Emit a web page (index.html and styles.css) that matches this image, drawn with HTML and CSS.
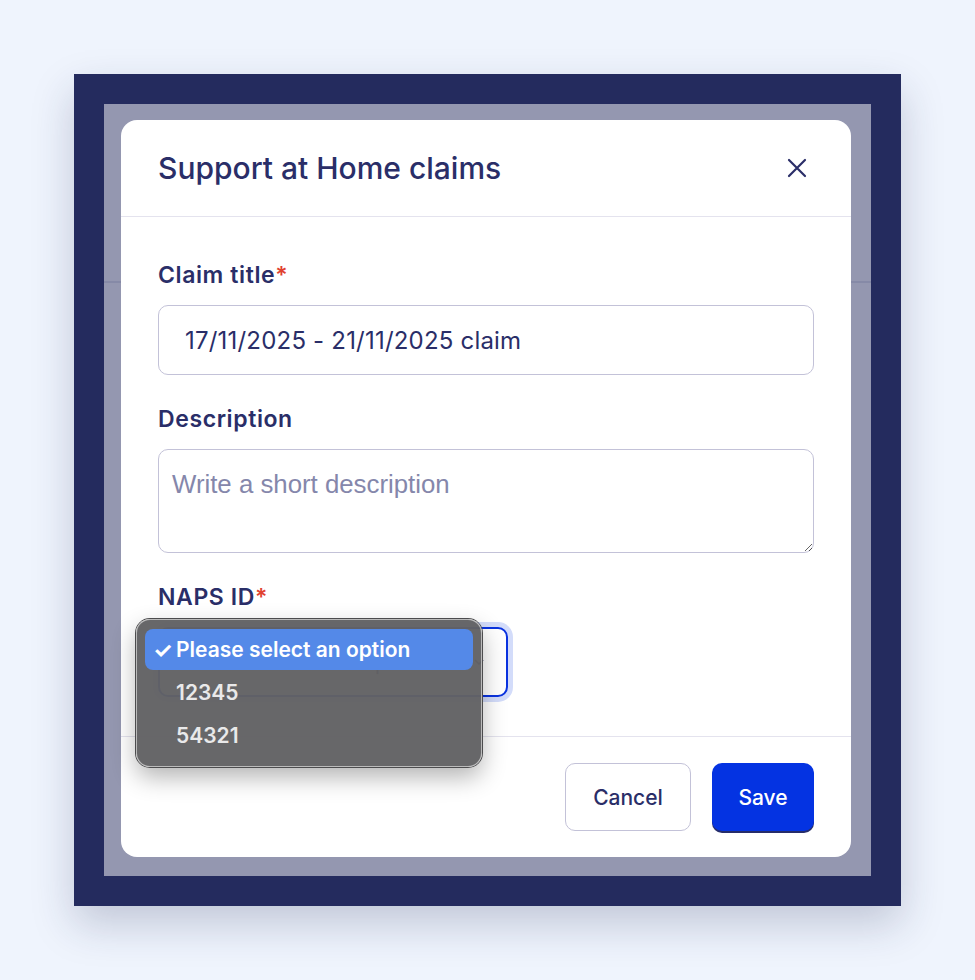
FILE: index.html
```html
<!DOCTYPE html>
<html lang="en">
<head>
  <meta charset="UTF-8" />
  <meta name="viewport" content="width=device-width, initial-scale=1.0"/>
  <title>Support at Home claims</title>
  <link rel="stylesheet" href="styles.css">
</head>
<body>
  <div class="screen">
    <div class="viewport">
      <!-- Page behind the dialog -->
      <div class="app-page">
        <div class="app-heading">Your support summary by type and approval</div>
        <div class="app-divider"></div>
      </div>

      <!-- Backdrop + dialog -->
      <div class="backdrop">
        <div class="modal">
          <div class="modal-header">
            <h2>Support at Home claims</h2>
            <button type="button" class="close-btn" aria-label="Close">
              <svg width="20" height="20" viewBox="0 0 20 20" fill="none" stroke="currentColor" stroke-width="2.2" stroke-linecap="round">
                <path d="M2 2 L18 18 M18 2 L2 18"/>
              </svg>
            </button>
          </div>

          <form class="modal-body" id="claimForm">
            <!-- Claim title -->
            <div class="form-group">
              <label for="claimTitle">Claim title<span class="req">*</span></label>
              <input type="text" id="claimTitle" value="17/11/2025 - 21/11/2025 claim">
            </div>

            <!-- Description -->
            <div class="form-group">
              <label for="claimDesc">Description</label>
              <textarea id="claimDesc" placeholder="Write a short description"></textarea>
            </div>

            <!-- NAPS ID select, open -->
            <div class="form-group">
              <label for="napsId">NAPS ID<span class="req">*</span></label>
              <div class="select-wrap">
                <div class="select-box" id="napsId">
                  <span class="select-value">Please select an option</span>
                  <svg class="chevron" width="10" height="6" viewBox="0 0 10 6" fill="none" stroke="#2b2f6b" stroke-width="1.6">
                    <path d="M1 1 L5 5 L9 1"/>
                  </svg>
                </div>
                <div class="select-menu">
                  <div class="menu-item selected"><span class="check">✓</span>Please select an option</div>
                  <div class="menu-item">12345</div>
                  <div class="menu-item">54321</div>
                </div>
              </div>
            </div>
          </form>

          <div class="modal-footer">
            <button type="button" class="cancel-btn">Cancel</button>
            <button type="submit" class="save-btn" form="claimForm">Save</button>
          </div>
        </div>
      </div>
    </div>
  </div>
</body>
</html>
```

FILE: styles.css
```css
body {
  margin: 0;
  padding: 74px;
  min-height: 100vh;
  box-sizing: border-box;
  background-color: #eff4fd;
  font-family: Inter, "Noto Sans", sans-serif;
}

.screen {
  width: 827px;
  height: 832px;
  box-sizing: border-box;
  padding: 30px;
  background-color: #242b5e;
  box-shadow: 0 18px 40px rgba(30, 40, 80, 0.22);
}

.viewport {
  display: grid;
  height: 100%;
  overflow: hidden;
  background-color: white;
}

.app-page,
.backdrop {
  grid-area: 1 / 1;
}

.app-page {
  display: flex;
  flex-direction: column;
}

.app-heading {
  margin-top: -29px;
  padding-left: 230px;
  height: 28px;
  font-size: 24px;
  line-height: 28px;
  color: #242b5e;
}

.app-divider {
  margin-top: 178px;
  border-bottom: 2px solid #e4e5ee;
}

.backdrop {
  padding: 16px 0 0 17px;
  background-color: rgba(36, 43, 94, 0.49);
}

.modal {
  width: 730px;
  height: 737px;
  background-color: white;
  border-radius: 16px;
  display: flex;
  flex-direction: column;
  color: #2a2e68;
}

.modal-header {
  height: 96px;
  padding: 0 44px 0 37px;
  display: flex;
  align-items: center;
  justify-content: space-between;
  border-bottom: 1px solid #e4e3ee;
}

.modal-header h2 {
  margin: 0;
  font-size: 30px;
  font-weight: 500;
}

.close-btn {
  border: none;
  background: none;
  padding: 0;
  color: #2a2e68;
  display: flex;
  cursor: pointer;
}

.modal-body {
  flex: 1;
  padding: 44px 37px 0;
  display: flex;
  flex-direction: column;
  gap: 30px;
  border-bottom: 1px solid #e4e3ee;
}

.form-group {
  display: flex;
  flex-direction: column;
}

label {
  font-size: 23px;
  line-height: 28px;
  font-weight: 600;
  letter-spacing: 0.6px;
  margin-bottom: 16px;
}

.req {
  color: #e0412f;
}

input[type="text"],
textarea,
.select-box {
  box-sizing: border-box;
  width: 100%;
  border: 1.5px solid #c3c2d8;
  border-radius: 10px;
  background-color: white;
  color: #2a2e68;
  font-family: inherit;
}

input[type="text"] {
  height: 70px;
  padding: 0 26px;
  font-size: 24px;
  letter-spacing: 0.2px;
}

textarea {
  height: 104px;
  padding: 20px 13px;
  font-family: "Liberation Sans", Arial, sans-serif;
  font-size: 25.8px;
  resize: vertical;
}

textarea::placeholder {
  color: #8587ab;
}

.select-wrap {
  position: relative;
  width: 350px;
}

.select-box {
  height: 70px;
  padding: 0 22px 0 26px;
  display: flex;
  align-items: center;
  justify-content: space-between;
  border: 2px solid #0a33e0;
  box-shadow: 0 0 0 5px #d3dcfa;
  font-size: 22px;
}

/* open native-style menu over the select */
.select-menu {
  position: absolute;
  left: -22px;
  top: -8px;
  width: 346px;
  box-sizing: border-box;
  padding: 9px 8px;
  border-radius: 14px;
  background-color: rgba(98, 98, 100, 0.97);
  border: 1px solid rgba(255, 255, 255, 0.55);
  box-shadow: 0 0 0 1px #4c4c4e, 0 10px 24px rgba(0, 0, 0, 0.3);
}

.menu-item {
  height: 43px;
  display: flex;
  align-items: center;
  padding-left: 31px;
  font-size: 21px;
  font-weight: 600;
  color: #e9e9ea;
}

.menu-item.selected {
  height: 41px;
  margin-bottom: 1px;
  padding-left: 8px;
  border-radius: 8px;
  background-color: #5489e8;
  color: white;
}

.check {
  width: 23px;
  font-size: 22px;
  font-weight: 700;
}

.modal-footer {
  height: 120px;
  padding: 0 37px;
  display: flex;
  align-items: center;
  justify-content: flex-end;
  gap: 21px;
}

.cancel-btn,
.save-btn {
  height: 68px;
  border-radius: 10px;
  font-family: inherit;
  font-size: 21px;
  font-weight: 500;
  cursor: pointer;
}

.cancel-btn {
  width: 126px;
  background-color: white;
  color: #2a2e68;
  border: 1.5px solid #c3c2d8;
}

.save-btn {
  width: 102px;
  background-color: #0433e2;
  color: white;
  border: none;
  box-shadow: 0 2px 0 #262d6a;
}
```
